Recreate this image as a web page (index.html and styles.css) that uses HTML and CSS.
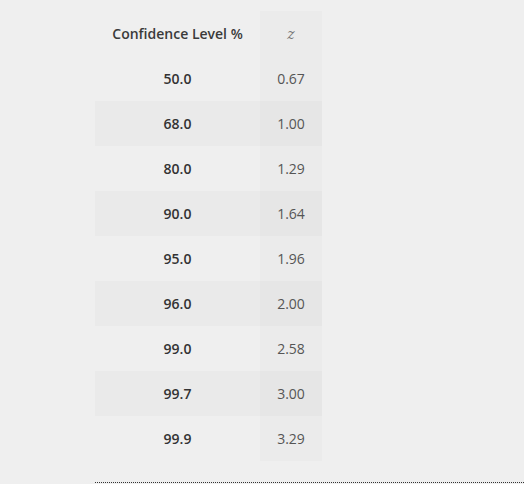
FILE: index.html
```html
<!DOCTYPE html>
<html>
<head>
<meta charset="utf-8">
<link rel="stylesheet" href="styles.css">
</head>
<body>
<div class="content">
  <table class="ztable">
    <colgroup><col class="c1"><col class="c2"></colgroup>
    <thead>
      <tr><th>Confidence Level %</th><th class="zcol"><span class="mathz">z</span></th></tr>
    </thead>
    <tbody>
      <tr><td class="lvl">50.0</td><td class="zcol">0.67</td></tr>
      <tr class="alt"><td class="lvl">68.0</td><td class="zcol">1.00</td></tr>
      <tr><td class="lvl">80.0</td><td class="zcol">1.29</td></tr>
      <tr class="alt"><td class="lvl">90.0</td><td class="zcol">1.64</td></tr>
      <tr><td class="lvl">95.0</td><td class="zcol">1.96</td></tr>
      <tr class="alt"><td class="lvl">96.0</td><td class="zcol">2.00</td></tr>
      <tr><td class="lvl">99.0</td><td class="zcol">2.58</td></tr>
      <tr class="alt"><td class="lvl">99.7</td><td class="zcol">3.00</td></tr>
      <tr><td class="lvl">99.9</td><td class="zcol">3.29</td></tr>
    </tbody>
  </table>
  <div class="rule"></div>
</div>
</body>
</html>
```

FILE: styles.css
```css
html, body {
  margin: 0;
  padding: 0;
  background: #efefef;
}
body {
  font-family: "Open Sans", "Liberation Sans", sans-serif;
  font-size: 14px;
  color: #444;
}
.content {
  padding: 11px 0 0 95px;
}
.ztable {
  border-collapse: collapse;
  border-spacing: 0;
}
.c1 { width: 165px; }
.c2 { width: 62px; }
.ztable th, .ztable td {
  height: 45px;
  padding: 0;
  text-align: center;
  vertical-align: middle;
  line-height: 20px;
}
.ztable th {
  font-weight: 600;
  color: #3a3a3a;
}
.lvl {
  font-weight: 600;
  color: #333;
}
.zcol {
  background: rgba(0, 0, 0, 0.015);
  color: #555;
}
.alt {
  background: rgba(0, 0, 0, 0.018);
}
.mathz {
  font-family: "DejaVu Serif", "Liberation Serif", serif;
  font-style: italic;
  font-weight: normal;
  color: #777;
  font-size: 14px;
}
.rule {
  margin-top: 21px;
  border-top: 1px dotted #333;
}
```
